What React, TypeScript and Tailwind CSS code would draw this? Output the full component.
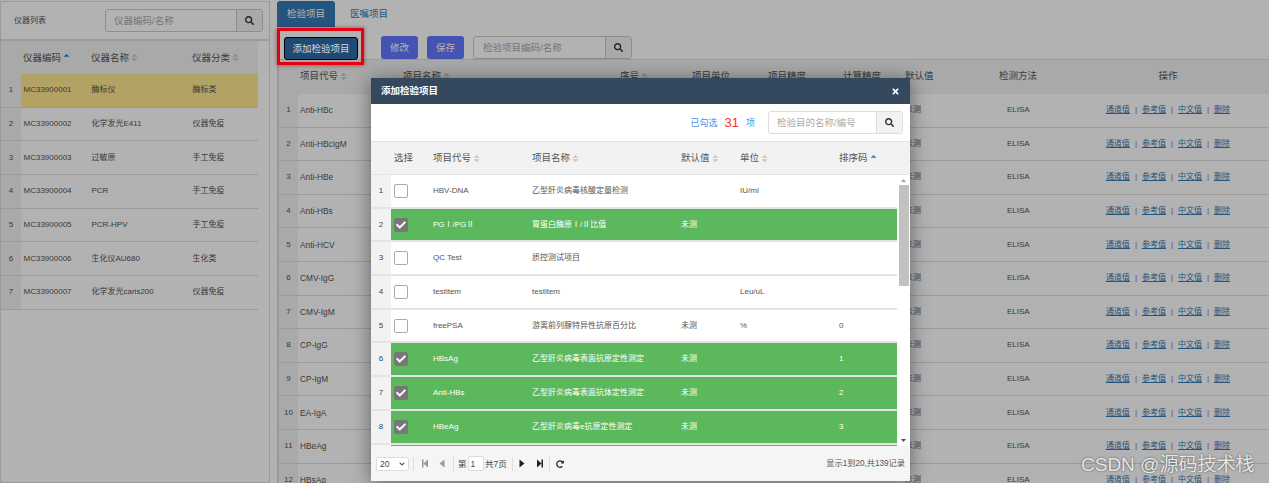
import { FaSearch, FaCheck, FaTimes, FaRedoAlt, FaChevronDown } from 'react-icons/fa';

const instruments = [
  ['MC33900001', '酶标仪', '酶标类'],
  ['MC33900002', '化学发光E411', '仪器免疫'],
  ['MC33900003', '过敏原', '手工免疫'],
  ['MC33900004', 'PCR', '手工免疫'],
  ['MC33900005', 'PCR-HPV', '手工免疫'],
  ['MC33900006', '生化仪AU680', '生化类'],
  ['MC33900007', '化学发光caris200', '仪器免疫'],
];

const testCodes = ['Anti-HBc', 'Anti-HBcIgM', 'Anti-HBe', 'Anti-HBs', 'Anti-HCV', 'CMV-IgG', 'CMV-IgM', 'CP-IgG', 'CP-IgM', 'EA-IgA', 'HBeAg', 'HBsAg'];

const modalRows = [
  { code: 'HBV-DNA', name: '乙型肝炎病毒核酸定量检测', def: '', unit: 'IU/ml', sort: '', on: false },
  { code: 'PGⅠ/PGⅡ', name: '胃蛋白酶原Ⅰ/Ⅱ比值', def: '未测', unit: '', sort: '', on: true },
  { code: 'QC Test', name: '质控测试项目', def: '', unit: '', sort: '', on: false },
  { code: 'testitem', name: 'testitem', def: '', unit: 'Leu/uL', sort: '', on: false },
  { code: 'freePSA', name: '游离前列腺特异性抗原百分比', def: '未测', unit: '%', sort: '0', on: false },
  { code: 'HBsAg', name: '乙型肝炎病毒表面抗原定性测定', def: '未测', unit: '', sort: '1', on: true },
  { code: 'Anti-HBs', name: '乙型肝炎病毒表面抗体定性测定', def: '未测', unit: '', sort: '2', on: true },
  { code: 'HBeAg', name: '乙型肝炎病毒e抗原定性测定', def: '未测', unit: '', sort: '3', on: true },
  { code: 'Anti-HBe', name: '', def: '', unit: '', sort: '', on: true },
];

function SortIcon({ active }: { active?: boolean }) {
  return (
    <svg width="7" height="9" viewBox="0 0 7 9" className="ml-[2px] inline-block shrink-0">
      <path d="M3.5 1 L6.5 3.8 H0.5 Z" fill={active ? '#337ab7' : '#c4c4c4'} />
      {!active && <path d="M3.5 8 L6.5 5.2 H0.5 Z" fill="#c4c4c4" />}
    </svg>
  );
}

function Th({ label, sort, active }: { label: string; sort?: boolean; active?: boolean }) {
  return (
    <div className="flex items-center pl-[2px] text-[9.5px] text-[#555]">
      {label}
      {sort && <SortIcon active={active} />}
    </div>
  );
}

function Links() {
  return (
    <div className="flex items-center justify-center gap-[5px] text-[8px] text-[#337ab7]">
      <span className="underline">通道值</span>
      <span className="text-[#777]">|</span>
      <span className="underline">参考值</span>
      <span className="text-[#8a4fa8]">|</span>
      <span className="underline">中文值</span>
      <span className="text-[#777]">|</span>
      <span className="underline">删除</span>
    </div>
  );
}

function PagerIcon({ d, color, className }: { d: string; color: string; className: string }) {
  return (
    <svg width="6" height="9" viewBox="0 0 6 9" className={className}>
      <path d={d} fill={color} />
    </svg>
  );
}

function PagerDivider({ className }: { className: string }) {
  return <div className={`h-[14px] w-px bg-[#ddd] ${className}`} />;
}

export default function App() {
  return (
    <div className="relative flex h-[483px] w-[1269px] overflow-hidden bg-white font-['Liberation_Sans','Noto_Sans_CJK_SC',sans-serif] text-[8px] leading-[12px] text-[#555]">
      {/* instrument list */}
      <div className="mt-px h-[482px] w-[270px] shrink-0 border border-[#ddd]">
        <div className="flex h-[39px] items-center justify-between border-b-2 border-[#ddd] pl-[13px] pr-[6px]">
          <span className="text-[8px]">仪器列表</span>
          <div className="flex h-[23px] w-[158px] rounded-[3px] border border-[#ccc]">
            <div className="flex flex-1 items-center pl-2 text-[9.5px] text-[#aaa]">仪器编码/名称</div>
            <div className="flex w-[26px] items-center justify-center border-l border-[#ccc] bg-[#f2f2f2] text-[#333]">
              <FaSearch size={9} />
            </div>
          </div>
        </div>
        <div className="w-[257px]">
          <div className="grid h-[33px] grid-cols-[20px_68px_101px_68px] bg-[#f2f2f2]">
            <div />
            <Th label="仪器编码" sort active />
            <Th label="仪器名称" sort />
            <Th label="仪器分类" sort />
          </div>
          {instruments.map((row, i) => (
            <div key={row[0]} className="grid h-[33.7px] grid-cols-[20px_68px_101px_68px] border-b border-[#ddd]">
              <div className="flex items-center justify-center bg-[#f2f2f2]">{i + 1}</div>
              {row.map((cell) => (
                <div key={cell} className={`flex items-center pl-[2.5px] ${i === 0 ? 'bg-[#ffe88f]' : ''}`}>
                  {cell}
                </div>
              ))}
            </div>
          ))}
        </div>
      </div>

      {/* test item panel */}
      <div className="ml-[7px] flex-1">
        <div className="flex h-[27px] items-end pt-px">
          <div className="flex h-[26px] w-[58px] items-center justify-center rounded-t-[3px] bg-[#337ab7] text-[9.5px] text-white">检验项目</div>
          <div className="flex h-[26px] w-[68px] items-center justify-center text-[9.5px] text-[#337ab7]">医嘱项目</div>
        </div>
        <div className="flex h-[33px] items-start border-b border-[#ddd] pl-[104px] pt-[9px]">
          <div className="flex h-[23px] w-[37px] items-center justify-center rounded-[3px] bg-[#6479ff] text-[9.5px] text-white">修改</div>
          <div className="ml-[9px] flex h-[23px] w-[37px] items-center justify-center rounded-[3px] bg-[#6479ff] text-[9.5px] text-white">保存</div>
          <div className="ml-[9px] flex h-[23px] w-[159px] rounded-[3px] border border-[#ccc]">
            <div className="flex flex-1 items-center pl-[9px] text-[9.5px] text-[#aaa]">检验项目编码/名称</div>
            <div className="flex w-[26px] items-center justify-center border-l border-[#ccc] bg-[#f2f2f2] text-[#333]">
              <FaSearch size={9} />
            </div>
          </div>
        </div>
        <div className="border-l-2 border-[#ddd]">
          <div className="grid h-[34px] grid-cols-[19px_103px_217px_72px_76px_75px_62px_94px_101px_140px_1fr] bg-[#f2f2f2] pb-[2px]">
            <div />
            <Th label="项目代号" sort />
            <Th label="项目名称" sort />
            <Th label="序号" sort />
            <Th label="项目单位" />
            <Th label="项目精度" />
            <Th label="计算精度" />
            <Th label="默认值" />
            <Th label="检测方法" />
            <div className="flex items-center justify-center text-[9.5px]">操作</div>
            <div />
          </div>
          {testCodes.map((code, i) => (
            <div key={code} className="grid h-[33.6px] grid-cols-[19px_103px_217px_72px_76px_75px_62px_94px_101px_140px_1fr] border-b border-[#ddd]">
              <div className="flex items-center justify-center bg-[#f2f2f2]">{i + 1}</div>
              <div className="flex items-center pl-[2px] text-[8.3px]">{code}</div>
              <div />
              <div />
              <div />
              <div />
              <div />
              <div className="flex items-center pl-[2px]">未测</div>
              <div className="flex items-center pl-[10px]">ELISA</div>
              <Links />
              <div />
            </div>
          ))}
        </div>
      </div>

      {/* backdrop */}
      <div className="absolute inset-0 bg-black/30" />

      {/* highlighted add button */}
      <div className="absolute left-[277px] top-[28px] h-[37px] w-[87px] border-[3px] border-[#e60012] pl-[4px] pt-[6px] shadow-[0_0_4px_rgba(120,0,0,0.6)]">
        <div className="flex h-[23px] w-[74px] items-center justify-center rounded-[3px] border border-black bg-[#1f4a74] text-[9.5px] text-[#cfd8e0]">
          添加检验项目
        </div>
      </div>

      {/* add test item modal */}
      <div className="absolute left-[371px] top-[78px] flex h-[403px] w-[539px] flex-col bg-white shadow-[0_2px_18px_rgba(0,0,0,0.45)]">
        <div className="flex h-[26px] shrink-0 items-center justify-between bg-[#34495e] pl-[10px] pr-[10px] text-white">
          <span className="text-[9.5px] font-bold">添加检验项目</span>
          <FaTimes size={9} />
        </div>
        <div className="flex h-[37px] shrink-0 items-center justify-end pr-[7px]">
          <span className="text-[9px] text-[#4a90e2]">已勾选</span>
          <span className="mx-[7px] text-[13px] text-[#ff2d2d]">31</span>
          <span className="text-[9px] text-[#4a90e2]">项</span>
          <div className="ml-[13px] flex h-[23px] w-[135px] rounded-[3px] border border-[#ddd]">
            <div className="flex flex-1 items-center pl-[8px] text-[9.5px] text-[#aaa]">检验目的名称/编号</div>
            <div className="flex w-[26px] items-center justify-center border-l border-[#ddd] bg-[#f2f2f2] text-[#333]">
              <FaSearch size={9} />
            </div>
          </div>
        </div>
        <div className="grid h-[34px] shrink-0 grid-cols-[20px_40px_99px_149px_59px_99px_73px] border-y border-[#e4e4e4] bg-[#f2f2f2]">
          <div />
          <div className="flex items-center pl-[3px] text-[9.5px] text-[#555]">选择</div>
          <Th label="项目代号" sort />
          <Th label="项目名称" sort />
          <Th label="默认值" sort />
          <Th label="单位" sort />
          <Th label="排序码" sort active />
        </div>
        <div className="flex min-h-0 flex-1">
          <div className="min-w-0 flex-1 overflow-hidden">
            {modalRows.slice(0, 8).map((row, i) => (
              <div key={row.code} className="grid h-[33.7px] grid-cols-[20px_40px_99px_149px_59px_99px_1fr] border-b-2 border-[#e4e4e4]">
                <div className="flex items-center justify-center bg-[#f2f2f2] text-[#34495e]">{i + 1}</div>
                <div className={`flex items-center pl-[3px] ${row.on ? 'bg-[#5cb85c]' : ''}`}>
                  <div className={`flex h-[14px] w-[14px] items-center justify-center rounded-[2px] border ${row.on ? 'border-[#777] bg-[#777] text-white' : 'border-[#aaa] bg-white'}`}>
                    {row.on && <FaCheck size={10} />}
                  </div>
                </div>
                {[row.code, row.name, row.def, row.unit, row.sort].map((cell, c) => (
                  <div key={c} className={`flex items-center pl-[2px] ${row.on ? 'bg-[#5cb85c] text-white' : ''}`}>
                    {cell}
                  </div>
                ))}
              </div>
            ))}
            {/* next green row, scrolled out of view */}
            <div className="grid h-[4px] grid-cols-[20px_1fr]">
              <div className="bg-[#f2f2f2]" />
              <div className="bg-[#5cb85c]" />
            </div>
          </div>
          <div className="flex w-[13px] shrink-0 flex-col items-center justify-between bg-white pb-[3px] pt-[3px]">
            <div className="flex w-full flex-1 flex-col items-center">
              <svg width="7" height="5" viewBox="0 0 7 5"><path d="M3.5 1 L6 4 H1 Z" fill="#a3a3a3" /></svg>
              <div className="mt-[2px] h-[101px] w-[10px] bg-[#c1c1c1]" />
            </div>
            <svg width="7" height="5" viewBox="0 0 7 5"><path d="M3.5 4 L6 1 H1 Z" fill="#505050" /></svg>
          </div>
        </div>
        <div className="flex h-[35px] shrink-0 items-center justify-between bg-[#f5f5f5] pl-[5px] pr-[5px] text-[8.5px] text-[#444]">
          <div className="flex items-center">
            <div className="flex h-[14px] w-[33px] items-center justify-between rounded-[2px] border border-[#ddd] bg-white px-[3px]">
              <span>20</span>
              <FaChevronDown size={6} />
            </div>
            <PagerDivider className="ml-[4px]" />
            <PagerIcon d="M0 .5h1.5v8H0zM6 .5v8L1.5 4.5z" color="#999" className="ml-[7.5px]" />
            <PagerIcon d="M5.5 .5v8L.5 4.5z" color="#999" className="ml-[11.5px]" />
            <PagerDivider className="ml-[7.5px]" />
            <span className="ml-[4.5px]">第</span>
            <div className="ml-[1px] flex h-[15px] w-[16px] items-center rounded-[2px] border border-[#ddd] bg-white pl-[2px]">1</div>
            <span className="ml-[1.5px]">共7页</span>
            <PagerDivider className="ml-[5px]" />
            <PagerIcon d="M.5 .5v8L5.5 4.5z" color="#222" className="ml-[6px]" />
            <PagerIcon d="M6 .5H4.5v8H6zM0 .5v8L4.5 4.5z" color="#222" className="ml-[12px]" />
            <PagerDivider className="ml-[6px]" />
            <FaRedoAlt size={8} className="ml-[6.5px] text-[#222]" />
          </div>
          <span className="text-[8.2px] text-[#555]">显示1到20,共139记录</span>
        </div>
      </div>

      {/* image watermark */}
      <div className="absolute left-[1081px] top-[453px] text-[19px] leading-[24px] text-white/85 [text-shadow:0_0_2px_rgba(0,0,0,0.7)]">
        CSDN @源码技术栈
      </div>
    </div>
  );
}
